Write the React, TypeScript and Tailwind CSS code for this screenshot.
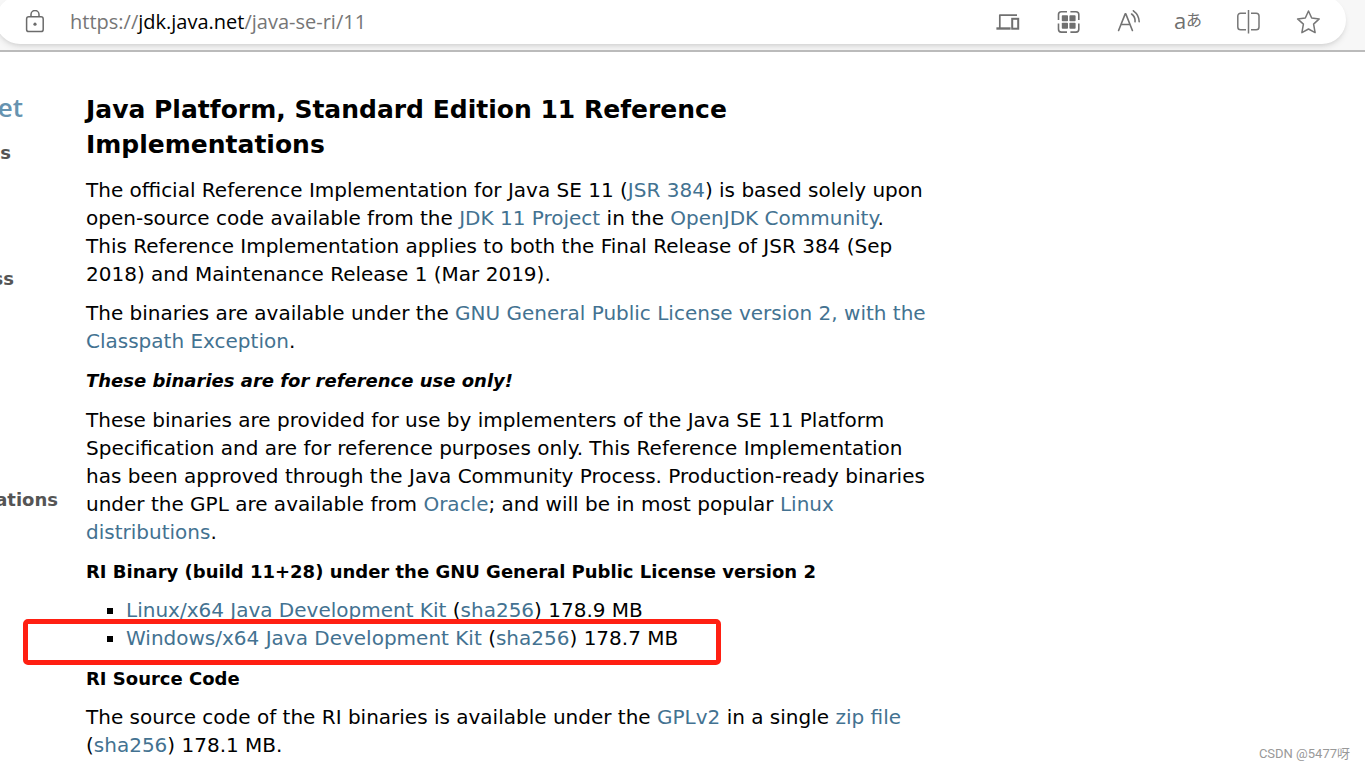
import React from "react";

const linkClass = "text-[#437291] hover:underline";

function Link({ children }: { children: React.ReactNode }) {
  return (
    <a href="#" className={linkClass}>
      {children}
    </a>
  );
}

function LockIcon() {
  return (
    <svg viewBox="0 0 24 24" className="w-6 h-6" fill="none" stroke="#6b6b6b" strokeWidth="1.5">
      <rect x="3.6" y="6.8" width="16.6" height="14.8" rx="2.2" />
      <path d="M8 6.8V4.500a4 4 0 0 1 8 0v2.300" />
      <circle cx="12" cy="14.2" r="1.6" fill="#6b6b6b" stroke="none" />
    </svg>
  );
}

function DevicesIcon() {
  return (
    <svg viewBox="0 0 24 24" className="w-6 h-6" fill="none" stroke="#707070">
      <path d="M3.8 18V5.200H21" strokeWidth="1.7" strokeLinejoin="round" />
      <path d="M0.4 18.500H14.6" strokeWidth="2.4" />
      <rect x="16.2" y="8.8" width="6" height="9.9" strokeWidth="2" />
    </svg>
  );
}

function AppsIcon() {
  return (
    <svg viewBox="0 0 24 24" className="w-6 h-6" fill="none" stroke="#707070" strokeWidth="1.6">
      <path d="M2.500 10V4.500A2.800 2.800 0 0 1 5.300 1.700H11M14.400 1.700H20A2.800 2.800 0 0 1 22.800 4.500V10M22.800 13.600v5.700a2.800 2.800 0 0 1-2.800 2.800h-5.600M11 22.100H5.300a2.800 2.800 0 0 1-2.800-2.800V13.600" />
      <g fill="#707070" stroke="none">
        <rect x="5.8" y="5.2" width="6.2" height="6" rx="0.8" />
        <rect x="13.4" y="5.2" width="6.2" height="6" rx="0.8" />
        <rect x="5.8" y="12.8" width="6.2" height="6" rx="0.8" />
        <rect x="13.4" y="12.8" width="6.2" height="6" rx="0.8" />
      </g>
    </svg>
  );
}

function ReadAloudIcon() {
  return (
    <svg viewBox="0 0 24 24" className="w-6 h-6" fill="none" stroke="#737373" strokeWidth="1.6" strokeLinecap="round" strokeLinejoin="round">
      <path d="M2.600 20.500L9.200 3.900h0.600L16.400 20.500M4.900 14.500h9.200" />
      <path d="M15.600 4a8.500 8.500 0 0 1 3.400 7.800M17.400 0.800a14 14 0 0 1 5.800 11" />
    </svg>
  );
}

function SplitIcon() {
  return (
    <svg viewBox="0 0 24 24" className="w-6 h-6" fill="none" stroke="#777777" strokeWidth="1.5">
      <path d="M10 3.200H4.600A2.800 2.800 0 0 0 1.800 6v11a2.800 2.800 0 0 0 2.800 2.800H10M15 3.200h5.200A2.800 2.800 0 0 1 23 6v11a2.800 2.800 0 0 1-2.800 2.800H15M12.500 0v23.500" />
    </svg>
  );
}

function StarIcon() {
  return (
    <svg viewBox="0 0 24 24" className="w-6 h-6" fill="none" stroke="#777777" strokeWidth="1.5" strokeLinejoin="round">
      <path d="M12.500 1l3.200 7 7.500 0.900-5.600 5.200 1.500 8.500-6.600-3.600-6.600 3.600 1.500-8.500L1.600 8.900l7.700-0.900z" />
    </svg>
  );
}

function TranslateIcon() {
  return (
    <span className="flex items-start justify-center w-6 h-6 text-[#707070] font-['Open_Sans','Noto_Sans_CJK_JP',sans-serif]">
      <span className="text-[22px] leading-5">a</span>
      <span className="text-base leading-5">あ</span>
    </span>
  );
}

const actions = [
  { name: "Devices", icon: DevicesIcon },
  { name: "Apps", icon: AppsIcon },
  { name: "Read aloud", icon: ReadAloudIcon },
  { name: "Translate", icon: TranslateIcon },
  { name: "Split screen", icon: SplitIcon },
  { name: "Favorite", icon: StarIcon },
];

export default function App() {
  return (
    <div className="relative min-h-screen w-full overflow-x-hidden bg-white text-black font-['DejaVu_Sans','Noto_Sans_CJK_SC',sans-serif] text-xl leading-7">
      <header className="h-[52px] overflow-hidden bg-[#f7f7f7] border-b-2 border-[#bbbbbb] pr-[19px]">
        <div className="-mt-1 -ml-1 h-12 rounded-full bg-white shadow-md shadow-black/10 flex items-center justify-between pl-[27px] pr-[26px] pt-[3px]">
          <div className="flex items-center gap-[23px]">
            <button aria-label="Site information">
              <LockIcon />
            </button>
            <div className="font-['Open_Sans',sans-serif] text-xl leading-6 text-[#767676]">
              https://<span className="text-black">jdk.java.net</span>/java-se-ri/11
            </div>
          </div>
          <div className="flex items-center gap-9">
            {actions.map((item) => (
              <button key={item.name} aria-label={item.name} className="w-6 h-6">
                <item.icon />
              </button>
            ))}
          </div>
        </div>
      </header>

      <div className="flex">
        <nav className="w-[86px] shrink-0 pt-[41px] flex flex-col items-start text-lg leading-7 font-bold text-[#555555]">
          <a href="#" className="flex w-[23px] justify-end overflow-hidden text-[26px] leading-7 font-semibold text-[#6693b0] font-['Open_Sans',sans-serif]">
            et
          </a>
          <span className="mt-[18px] flex w-[11px] justify-end overflow-hidden">s</span>
          <span className="mt-[98px] flex w-[14px] justify-end overflow-hidden">ss</span>
          <span className="mt-[193px] flex w-[58px] justify-end overflow-hidden">ations</span>
        </nav>

        <main className="flex-1 max-w-[844px] pt-10">
          <h1 className="text-[25px] leading-[35px] font-bold">
            Java Platform, Standard Edition 11 Reference Implementations
          </h1>
          <p className="mt-3.5">
            The official Reference Implementation for Java SE 11 (<Link>JSR 384</Link>) is based solely upon
            open-source code available from the <Link>JDK 11 Project</Link> in the{" "}
            <Link>OpenJDK Community</Link>. This Reference Implementation applies to both the Final Release of
            JSR 384 (Sep 2018) and Maintenance Release 1 (Mar 2019).
          </p>
          <p className="mt-[11px]">
            The binaries are available under the{" "}
            <Link>GNU General Public License version 2, with the Classpath Exception</Link>.
          </p>
          <h2 className="mt-3 text-lg leading-7 font-bold italic">These binaries are for reference use only!</h2>
          <p className="mt-[11px]">
            These binaries are provided for use by implementers of the Java SE 11 Platform Specification and are
            for reference purposes only. This Reference Implementation has been approved through the Java
            Community Process. Production-ready binaries under the GPL are available from <Link>Oracle</Link>;
            and will be in most popular <Link>Linux distributions</Link>.
          </p>
          <h2 className="mt-3 text-lg leading-7 font-bold">
            RI Binary (build 11+28) under the GNU General Public License version 2
          </h2>
          <div className="relative mt-2.5">
            <ul className="pl-10 list-[square]">
              <li>
                <Link>Linux/x64 Java Development Kit</Link> (<Link>sha256</Link>) 178.9 MB
              </li>
              <li>
                <Link>Windows/x64 Java Development Kit</Link> (<Link>sha256</Link>) 178.7 MB
              </li>
            </ul>
            {/* highlight around the Windows download */}
            <div className="absolute left-[-63px] top-[23px] w-[698px] h-[46px] border-5 border-[#ff1f12] rounded-[5px] pointer-events-none" />
          </div>
          <h2 className="mt-[13px] text-lg leading-7 font-bold">RI Source Code</h2>
          <p className="mt-2.5">
            The source code of the RI binaries is available under the <Link>GPLv2</Link> in a single{" "}
            <Link>zip file</Link> (<Link>sha256</Link>) 178.1 MB.
          </p>
        </main>
      </div>

      <div className="absolute right-[15px] bottom-1.5 text-[13px] leading-[18px] text-[#999999] font-['Roboto','Noto_Sans_CJK_SC',sans-serif]">
        CSDN @5477呀
      </div>
    </div>
  );
}
